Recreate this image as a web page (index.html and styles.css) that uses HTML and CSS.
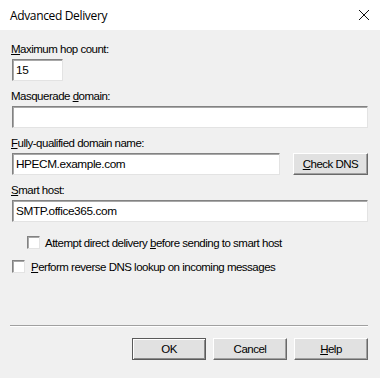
FILE: index.html
```html
<!DOCTYPE html>
<html>
<head>
<meta charset="utf-8">
<link rel="stylesheet" href="styles.css">
</head>
<body>
<div class="dialog">
  <div class="titlebar">
    <span class="title">Advanced Delivery</span>
    <svg class="close" width="12" height="12" viewBox="0 0 12 12"><path d="M1 1 L11 11 M11 1 L1 11" stroke="#111" stroke-width="1" fill="none"/></svg>
  </div>
  <div class="content">
    <div class="field">
      <label class="lbl"><u>M</u>aximum hop count:</label>
      <div class="input short">15</div>
    </div>
    <div class="field">
      <label class="lbl">Masquerade <u>d</u>omain:</label>
      <div class="input full"></div>
    </div>
    <div class="field">
      <label class="lbl"><u>F</u>ully-qualified domain name:</label>
      <div class="row">
        <div class="input fqdn">HPECM.example.com</div>
        <div class="btn dns"><u>C</u>heck DNS</div>
      </div>
    </div>
    <div class="field">
      <label class="lbl"><u>S</u>mart host:</label>
      <div class="input full">SMTP.office365.com</div>
    </div>
    <div class="check indent"><span class="box"></span><span>Attempt direct delivery <u>b</u>efore sending to smart host</span></div>
    <div class="check"><span class="box"></span><span><u>P</u>erform reverse DNS lookup on incoming messages</span></div>
    <div class="spacer"></div>
    <div class="sep"></div>
    <div class="buttons">
      <div class="btn def">OK</div>
      <div class="btn">Cancel</div>
      <div class="btn"><u>H</u>elp</div>
    </div>
  </div>
</div>
</body>
</html>
```
FILE: styles.css
```css
html, body {
  margin: 0;
  padding: 0;
  width: 380px;
  height: 378px;
  overflow: hidden;
  background: #f0f0f0;
}
.dialog {
  width: 380px;
  height: 378px;
  display: flex;
  flex-direction: column;
  font-family: "Liberation Sans", Arial, sans-serif;
  font-size: 11.5px;
  letter-spacing: -0.5px;
  color: #000;
}
.titlebar {
  height: 30px;
  background: #fff;
  display: flex;
  align-items: center;
  justify-content: space-between;
  padding: 0 10px;
  flex-shrink: 0;
}
.title {
  font-family: "Open Sans", "Noto Sans", sans-serif;
  font-size: 12px;
  letter-spacing: -0.35px;
  color: #000;
  padding-top: 1px;
}
.content {
  flex: 1;
  display: flex;
  flex-direction: column;
  padding: 13px 12px 0 12px;
}
.field {
  display: flex;
  flex-direction: column;
}
.lbl {
  line-height: 13px;
  height: 13px;
  margin-bottom: 3px;
  margin-left: -1px;
}
.field + .field {
  margin-top: 9px;
}
.input {
  box-sizing: border-box;
  height: 22px;
  background: #fff;
  border-top: 1px solid #828282;
  border-left: 1px solid #828282;
  border-bottom: 1px solid #e3e3e3;
  border-right: 1px solid #e3e3e3;
  box-shadow: inset 1px 1px 0 #a8a8a8;
  padding: 0 3px;
  font-size: 11.8px;
  letter-spacing: -0.4px;
  line-height: 20px;
  color: #000;
}
.short { width: 51px; }
.full { width: 356px; }
.fqdn { width: 268px; }
.row {
  display: flex;
  gap: 13px;
  align-items: flex-start;
}
.btn {
  box-sizing: border-box;
  width: 74px;
  height: 22px;
  background: #e1e1e1;
  border-top: 1px solid #fff;
  border-left: 1px solid #fff;
  border-right: 1px solid #696969;
  border-bottom: 1px solid #696969;
  box-shadow: inset -1px -1px 0 #a0a0a0;
  display: flex;
  align-items: center;
  justify-content: center;
}
.btn.dns { width: 75px; }
.btn.def {
  border: 1px solid #5a5a5a;
  box-shadow: inset 1px 1px 0 #fff, inset -1px -1px 0 #8a8a8a;
}
.check {
  display: flex;
  align-items: center;
  gap: 6px;
  height: 13px;
  margin-top: 11px;
}
.check.indent {
  margin-left: 15px;
  margin-top: 14px;
  gap: 5px;
}
.box {
  box-sizing: border-box;
  width: 13px;
  height: 13px;
  background: #fff;
  border-top: 1px solid #828282;
  border-left: 1px solid #828282;
  border-bottom: 1px solid #e3e3e3;
  border-right: 1px solid #e3e3e3;
  box-shadow: inset 1px 1px 0 #a8a8a8;
  flex-shrink: 0;
}
.spacer { flex: 1; }
.sep {
  height: 0;
  border-top: 1px solid #a0a0a0;
  border-bottom: 1px solid #fff;
  margin: 0 0 11px -2px;
  width: 358px;
}
.buttons {
  display: flex;
  justify-content: flex-end;
  gap: 7px;
  margin-bottom: 18px;
}
u { text-decoration: underline; text-underline-offset: 1px; }
```
